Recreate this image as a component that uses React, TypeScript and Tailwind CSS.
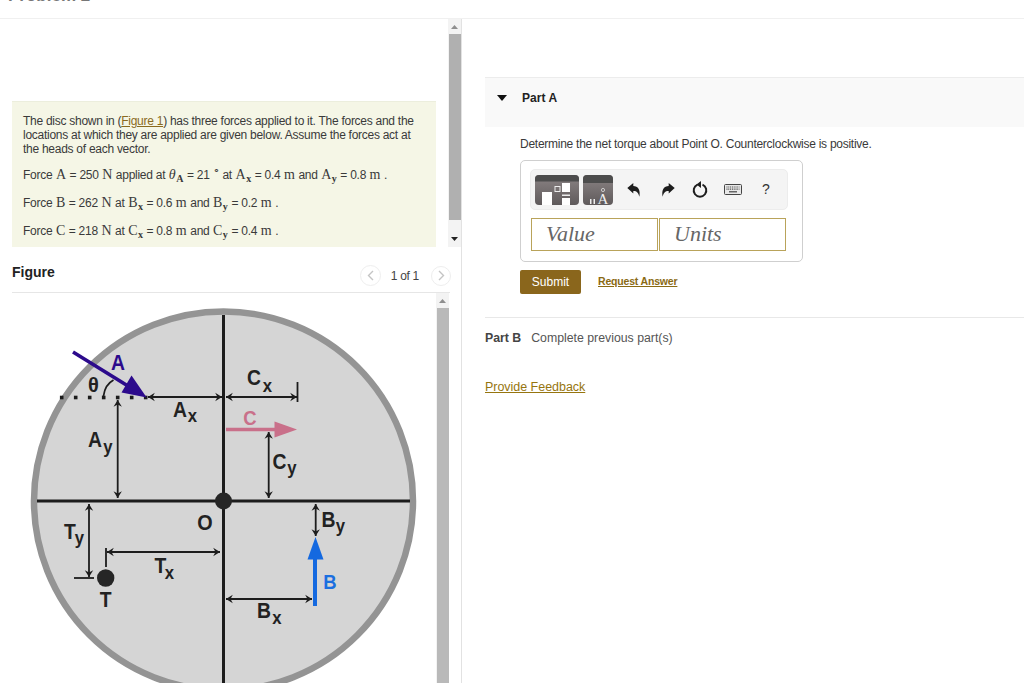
import React from "react";

const S = ({ children }: { children: React.ReactNode }) => (
  <span className="font-['Liberation_Serif',serif] text-[14px] tracking-normal px-[0.5px]">{children}</span>
);
const Sub = ({ children }: { children: React.ReactNode }) => (
  <sub className="font-['Liberation_Serif',serif] text-[10px] tracking-normal font-bold leading-none relative top-[0px] align-sub pr-[0.5px]">{children}</sub>
);

function ScrollArrow({ dir }: { dir: "up" | "down" }) {
  return (
    <svg width="7" height="4" viewBox="0 0 7 4">
      <path d={dir === "up" ? "M3.5 0 L7 4 H0 Z" : "M0 0 H7 L3.5 4 Z"} fill={dir === "up" ? "#8f8f8f" : "#222"} />
    </svg>
  );
}

function Arrow({ x1, y1, x2, y2 }: { x1: number; y1: number; x2: number; y2: number }) {
  const a = Math.atan2(y2 - y1, x2 - x1);
  const head = (x: number, y: number, ang: number) => {
    const l = 8;
    const w = 0.55;
    const p1 = [x - l * Math.cos(ang - w), y - l * Math.sin(ang - w)];
    const p2 = [x - l * Math.cos(ang + w), y - l * Math.sin(ang + w)];
    const n = [x - 4.5 * Math.cos(ang), y - 4.5 * Math.sin(ang)];
    return `M${p1[0]} ${p1[1]} L${x} ${y} L${p2[0]} ${p2[1]} L${n[0]} ${n[1]} Z`;
  };
  return (
    <g>
      <line x1={x1} y1={y1} x2={x2} y2={y2} stroke="#1c1c1c" strokeWidth="1.8" />
      <path d={head(x2, y2, a)} fill="#1c1c1c" />
      <path d={head(x1, y1, a + Math.PI)} fill="#1c1c1c" />
    </g>
  );
}

function Label({ x, y, t, sub, sx, sy }: { x: number; y: number; t: string; sub?: string; sx?: number; sy?: number }) {
  return (
    <g className="font-['Liberation_Sans',sans-serif] font-bold" fill="#222">
      <text transform={`translate(${x} ${y}) scale(0.88 1)`} fontSize="22" textAnchor="middle">{t}</text>
      {sub && <text transform={`translate(${sx} ${sy}) scale(0.88 1)`} fontSize="19" textAnchor="middle">{sub}</text>}
    </g>
  );
}

function Disc() {
  const dots = [61.7, 75.7, 89.7, 103.7, 117.7, 131.7, 145.7];
  return (
    <svg width="424" height="390" viewBox="12 293 424 390" className="block shrink-0">
      <circle cx="223.5" cy="501" r="189.5" fill="#d5d5d5" stroke="#949494" strokeWidth="6.5" />
      <line x1="223.5" y1="315" x2="223.5" y2="683" stroke="#1c1c1c" strokeWidth="3" />
      <line x1="37" y1="501" x2="410" y2="501" stroke="#1c1c1c" strokeWidth="3" />
      <circle cx="223.5" cy="501" r="8.5" fill="#262626" />
      {/* A */}
      {dots.map((x) => (
        <rect key={x} x={x - 1.8} y="395.7" width="3.6" height="3.6" fill="#1c1c1c" />
      ))}
      <path d="M103.5 396 C104.5 388 108 383 113.5 380" fill="none" stroke="#1c1c1c" strokeWidth="1.8" />
      <line x1="73" y1="352" x2="128" y2="386" stroke="#2c0a8c" strokeWidth="3.6" />
      <path d="M146.7 397.5 L121.5 392.5 L131.5 375.5 Z" fill="#2c0a8c" />
      <text transform="translate(118 370) scale(0.88 1)" fontSize="22" fontWeight="700" textAnchor="middle" fill="#2c0a8c" className="font-['Liberation_Sans',sans-serif]">A</text>
      <text x="93.5" y="392" fontSize="20" fontWeight="700" textAnchor="middle" fill="#222" className="font-['Liberation_Sans',sans-serif]">θ</text>
      <Arrow x1={148} y1={397} x2={222} y2={397} />
      <Label x={180} y={417} t="A" sub="x" sx={192.5} sy={422} />
      <Arrow x1={117.7} y1={400} x2={117.7} y2={498} />
      <Label x={95} y={447} t="A" sub="y" sx={108} sy={453} />
      {/* C */}
      <Arrow x1={226} y1={397} x2={297} y2={397} />
      <line x1="297.5" y1="382" x2="297.5" y2="402" stroke="#1c1c1c" strokeWidth="1.8" />
      <Label x={254} y={385} t="C" sub="x" sx={267.5} sy={391.5} />
      <line x1="226" y1="429.5" x2="278" y2="429.5" stroke="#c9708a" strokeWidth="3.6" />
      <path d="M297 429.5 L274.5 421.5 V437.5 Z" fill="#c9708a" />
      <text transform="translate(250 424.5) scale(0.88 1)" fontSize="21" fontWeight="700" textAnchor="middle" fill="#c9708a" className="font-['Liberation_Sans',sans-serif]">C</text>
      <Arrow x1={268.7} y1={432} x2={268.7} y2={498} />
      <Label x={279.5} y={469} t="C" sub="y" sx={292} sy={474} />
      {/* B */}
      <Arrow x1={315.7} y1={504} x2={315.7} y2={536} />
      <Label x={328.5} y={527} t="B" sub="y" sx={340.5} sy={532} />
      <line x1="315" y1="556" x2="315" y2="606" stroke="#1469e0" strokeWidth="4" />
      <path d="M315.5 537 L307.5 559.5 H323.5 Z" fill="#1469e0" />
      <text transform="translate(330 589) scale(0.88 1)" fontSize="21" fontWeight="700" textAnchor="middle" fill="#1b6fe0" className="font-['Liberation_Sans',sans-serif]">B</text>
      <Arrow x1={226} y1={599} x2={312} y2={599} />
      <Label x={264} y={618} t="B" sub="x" sx={277} sy={624} />
      {/* O */}
      <text transform="translate(205 529.5) scale(0.9 1)" fontSize="22" fontWeight="700" textAnchor="middle" fill="#222" className="font-['Liberation_Sans',sans-serif]">O</text>
      {/* T */}
      <Arrow x1={89} y1={504} x2={89} y2={577} />
      <line x1="74" y1="578" x2="94" y2="578" stroke="#1c1c1c" strokeWidth="1.8" />
      <circle cx="105.7" cy="578" r="8.7" fill="#262626" />
      <line x1="106" y1="548" x2="106" y2="567" stroke="#1c1c1c" strokeWidth="1.8" />
      <Arrow x1={107} y1={552} x2={220} y2={552} />
      <Label x={160.5} y={573} t="T" sub="x" sx={169.5} sy={578.5} />
      <Label x={70} y={539} t="T" sub="y" sx={79.5} sy={544} />
      <Label x={105.7} y={606.5} t="T" />
    </svg>
  );
}

function MatrixButton() {
  return (
    <svg width="44" height="30" viewBox="0 0 44 30" className="block shrink-0">
      <defs>
        <linearGradient id="tb1" x1="0" y1="0" x2="0" y2="1">
          <stop offset="0" stopColor="#8b8485" />
          <stop offset="1" stopColor="#5f5a5b" />
        </linearGradient>
      </defs>
      <rect width="44" height="30" rx="4" fill="url(#tb1)" />
      <path d="M4 0 H40 A4 4 0 0 1 44 4 V6.5 H0 V4 A4 4 0 0 1 4 0 Z" fill="#4d4d4d" />
      <rect x="7" y="17" width="10" height="13" fill="#fff" />
      <rect x="20" y="11.5" width="5" height="5" fill="none" stroke="#eee" strokeWidth="1" />
      <rect x="27" y="8" width="8" height="9" fill="#fff" />
      <rect x="27" y="19.5" width="8" height="1.5" fill="#eee" />
      <rect x="27" y="23" width="8" height="7" fill="#fff" />
    </svg>
  );
}

function UnitButton() {
  return (
    <svg width="30" height="30" viewBox="0 0 30 30" className="block shrink-0">
      <defs>
        <linearGradient id="tb2" x1="0" y1="0" x2="0" y2="1">
          <stop offset="0" stopColor="#8b8485" />
          <stop offset="1" stopColor="#5f5a5b" />
        </linearGradient>
      </defs>
      <rect width="30" height="30" rx="4" fill="url(#tb2)" />
      <path d="M4 0 H26 A4 4 0 0 1 30 4 V8 H0 V4 A4 4 0 0 1 4 0 Z" fill="#4d4d4d" />
      <text x="20" y="28.5" fontSize="15" textAnchor="middle" fill="#eee" className="font-['Liberation_Serif',serif]">A</text>
      <circle cx="20" cy="15" r="1.6" fill="none" stroke="#ddd" strokeWidth="0.8" />
      <rect x="7" y="24" width="1.5" height="5" fill="#eee" />
      <rect x="10.5" y="24" width="1.5" height="5" fill="#eee" />
    </svg>
  );
}

function Undo({ flip }: { flip?: boolean }) {
  return (
    <svg width="14" height="14" viewBox="0 0 14 14" className={flip ? "block shrink-0 -scale-x-100" : "block shrink-0"}>
      <path d="M0.3 5 L6.3 0 V3 C11 3 13.6 6.5 12.4 13.8 C11.4 10 10 8 6.3 8 V10.5 Z" fill="#1d1d1d" />
    </svg>
  );
}

function Reset() {
  return (
    <svg width="16" height="17" viewBox="0 0 16 17" className="block shrink-0">
      <path d="M5.5 3.6 A6.3 6.3 0 1 0 10.5 3.6" fill="none" stroke="#1d1d1d" strokeWidth="2" />
      <path d="M9 0 L9 7 L4.5 3.5 Z" fill="#1d1d1d" />
    </svg>
  );
}

function Keyboard() {
  return (
    <svg width="18" height="11" viewBox="0 0 18 11" className="block shrink-0">
      <rect x="0.5" y="0.5" width="17" height="10" rx="1" fill="#e8e8e8" stroke="#444" />
      <path d="M2.5 3 H15.5 M2.5 5.2 H15.5" stroke="#444" strokeWidth="1.2" strokeDasharray="1 0.8" />
      <path d="M5 7.8 H13" stroke="#444" strokeWidth="1.2" />
    </svg>
  );
}

export default function App() {
  return (
    <div className="w-[1024px] h-[683px] overflow-hidden bg-white flex flex-col font-['Liberation_Sans',sans-serif] text-[#333]">
      <div className="h-[19px] shrink-0 border-b border-[#f0f0f0] overflow-hidden">
        <div className="pl-2 -mt-[13px] text-[17px] leading-[18px] font-bold text-[#777]">Problem 2</div>
      </div>
      <div className="flex-1 flex min-h-0">
        <div className="w-[462px] shrink-0 border-r border-[#e2e2e2] flex flex-col min-h-0">
          <div className="h-[228px] shrink-0 flex">
            <div className="flex-1 min-w-0 pl-3 pr-3 pt-[82px]">
              <div className="bg-[#f5f6e6] border-t border-[#eceedd] pl-[11px] pt-[12px] pb-[9px] text-[12px] leading-[14px] tracking-[-0.27px] whitespace-nowrap text-[#3a3a3a]">
                <p>
                  The disc shown in (<span className="text-[#8a6a1e] underline">Figure 1</span>) has three forces applied to it. The forces and the
                  <br />
                  locations at which they are applied are given below. Assume the forces act at
                  <br />
                  the heads of each vector.
                </p>
                <p className="mt-[12px] h-[14px]">
                  Force <S>A</S> = 250 <S>N</S> applied at <S><i>θ</i></S><Sub>A</Sub> = 21 <sup className="text-[11px]">∘</sup> at <S>A</S><Sub>x</Sub> = 0.4 <S>m</S> and <S>A</S><Sub>y</Sub> = 0.8 <S>m</S> .
                </p>
                <p className="mt-[14px] h-[14px]">
                  Force <S>B</S> = 262 <S>N</S> at <S>B</S><Sub>x</Sub> = 0.6 <S>m</S> and <S>B</S><Sub>y</Sub> = 0.2 <S>m</S> .
                </p>
                <p className="mt-[14px] h-[14px]">
                  Force <S>C</S> = 218 <S>N</S> at <S>C</S><Sub>x</Sub> = 0.8 <S>m</S> and <S>C</S><Sub>y</Sub> = 0.4 <S>m</S> .
                </p>
              </div>
            </div>
            <div className="w-[13px] shrink-0 bg-[#f3f3f3] flex flex-col items-center">
              <div className="h-[15px] flex items-center justify-center"><ScrollArrow dir="up" /></div>
              <div className="w-[12px] h-[186px] bg-[#b0b0b0]" />
              <div className="flex-1 flex items-end pb-[6px]"><ScrollArrow dir="down" /></div>
            </div>
          </div>
          <div className="h-[46px] shrink-0 ml-3 mr-[11px] border-b border-[#e6e6e6] flex items-center justify-between pt-[5px]">
            <span className="text-[14px] font-bold text-[#222]">Figure</span>
            <div className="flex items-center text-[12px] tracking-[-0.3px] text-[#444] -mr-[1px] mt-[7px]">
              <div className="w-[21px] h-[21px] rounded-full border border-[#eeeeee] flex items-center justify-center">
                <svg width="7" height="11" viewBox="0 0 7 11"><path d="M6 1 L1.5 5.5 L6 10" fill="none" stroke="#c4c4c4" strokeWidth="1.4" /></svg>
              </div>
              <span className="ml-[10px] mr-[12px]">1 of 1</span>
              <div className="w-[20px] h-[20px] rounded-full border border-[#eeeeee] flex items-center justify-center">
                <svg width="7" height="11" viewBox="0 0 7 11"><path d="M1 1 L5.5 5.5 L1 10" fill="none" stroke="#c4c4c4" strokeWidth="1.4" /></svg>
              </div>
            </div>
          </div>
          <div className="flex-1 flex min-h-0 pl-3">
            <Disc />
            <div className="w-[13px] shrink-0 bg-[#f3f3f3] flex flex-col items-center">
              <div className="h-[15px] flex items-center justify-center"><ScrollArrow dir="up" /></div>
              <div className="w-[12px] flex-1 bg-[#b9b9b9]" />
            </div>
          </div>
        </div>
        <div className="flex-1 min-w-0 pl-[23px] pt-[58px] flex flex-col items-stretch">
          <div className="h-[50px] shrink-0 bg-[#f9f9f9] border-t border-[#ececec] flex items-center pl-[12px] gap-[15px] pb-[10px]">
            <svg width="10" height="6" viewBox="0 0 10 6"><path d="M0 0 H10 L5 6 Z" fill="#111" /></svg>
            <span className="text-[12px] font-bold text-[#222] tracking-[0.05px]">Part A</span>
          </div>
          <div className="pl-[35px] pt-[10px]">
            <p className="text-[12px] leading-[14px] tracking-[-0.26px] text-[#3a3a3a]">Determine the net torque about Point O. Counterclockwise is positive.</p>
            <div className="mt-[9px] w-[283px] h-[102px] rounded-[5px] border border-[#cfcfcf] pt-[8px] pl-[9px]">
              <div className="w-[258px] h-[41px] rounded-[5px] border border-[#ececec] bg-[#f4f4f4] flex items-center pl-[4px]">
                <MatrixButton />
                <div className="ml-[4px]"><UnitButton /></div>
                <div className="ml-[14px]"><Undo /></div>
                <div className="ml-[20px]"><Undo flip /></div>
                <div className="ml-[17px]"><Reset /></div>
                <div className="ml-[16px]"><Keyboard /></div>
                <span className="ml-[20px] text-[14px] text-[#333]">?</span>
              </div>
              <div className="mt-[8px] ml-[1px] flex gap-[1px]">
                <div className="w-[127px] h-[33px] border border-[#b9a35a] pl-[14px] pb-[2px] flex items-center font-['Liberation_Serif',serif] italic text-[22px] text-[#666]">Value</div>
                <div className="w-[127px] h-[33px] border border-[#b9a35a] pl-[14px] pb-[2px] flex items-center font-['Liberation_Serif',serif] italic text-[22px] text-[#666]">Units</div>
              </div>
            </div>
            <div className="mt-[8px] flex items-center gap-[17px]">
              <div className="w-[61px] h-[24px] rounded-[2px] bg-[#8a661c] text-white text-[12px] flex items-center justify-center">Submit</div>
              <span className="text-[10.5px] font-bold underline text-[#8a6a14] tracking-[-0.18px]">Request Answer</span>
            </div>
          </div>
          <div className="mt-[23px] border-t border-[#e8e8e8] pt-[13px] flex items-center text-[12.3px] leading-[14px]">
            <span className="font-bold text-[#444]">Part B</span>
            <span className="ml-[10px] text-[#555]">Complete previous part(s)</span>
          </div>
          <div className="mt-[35px] text-[12.5px] tracking-[-0.03px] leading-[14px] underline text-[#96750f]">Provide Feedback</div>
        </div>
      </div>
    </div>
  );
}
